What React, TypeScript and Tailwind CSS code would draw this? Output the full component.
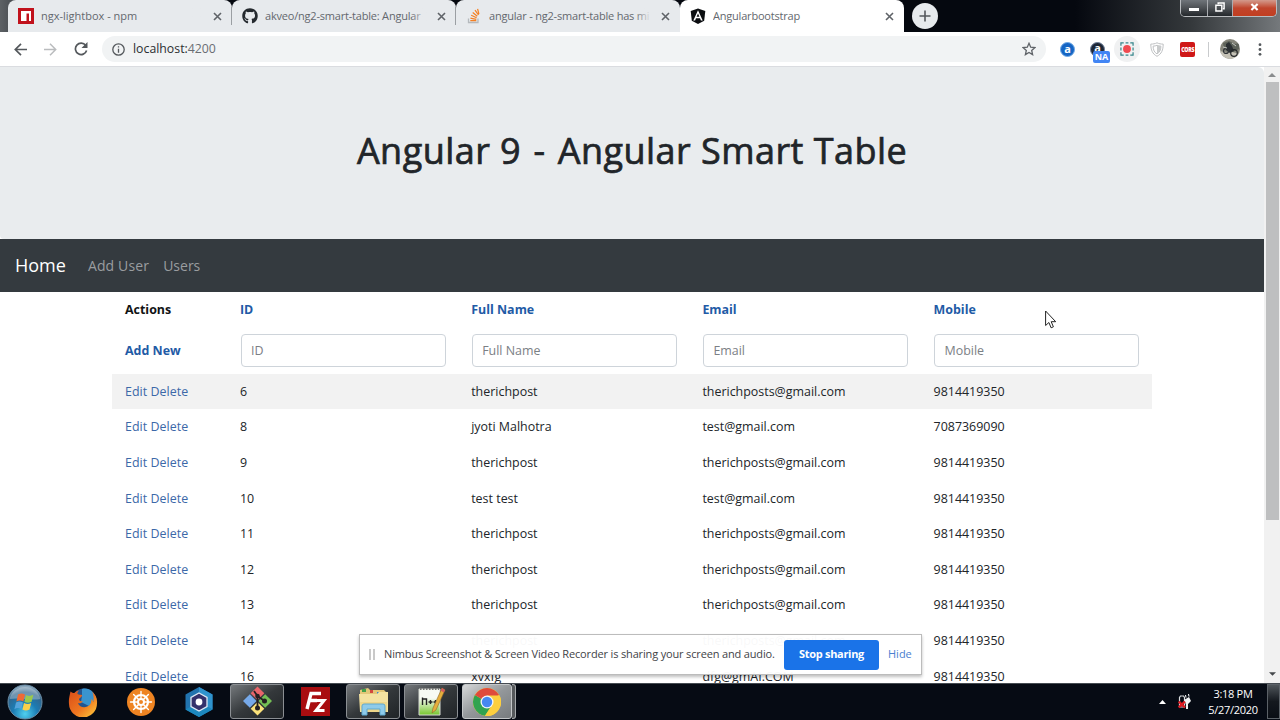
import type { ReactNode } from "react";
import { FaGithub } from "react-icons/fa";

const rows = [
  { id: "6", name: "therichpost", email: "therichposts@gmail.com", mobile: "9814419350" },
  { id: "8", name: "jyoti Malhotra", email: "test@gmail.com", mobile: "7087369090" },
  { id: "9", name: "therichpost", email: "therichposts@gmail.com", mobile: "9814419350" },
  { id: "10", name: "test test", email: "test@gmail.com", mobile: "9814419350" },
  { id: "11", name: "therichpost", email: "therichposts@gmail.com", mobile: "9814419350" },
  { id: "12", name: "therichpost", email: "therichposts@gmail.com", mobile: "9814419350" },
  { id: "13", name: "therichpost", email: "therichposts@gmail.com", mobile: "9814419350" },
  { id: "14", name: "therichpost", email: "therichposts@gmail.com", mobile: "9814419350" },
  { id: "16", name: "xvxfg", email: "dfg@gmAI.COM", mobile: "9814419350" },
];

const columns = ["ID", "Full Name", "Email", "Mobile"];

function CloseIcon() {
  return (
    <svg className="h-[9px] w-[9px] shrink-0" viewBox="0 0 9 9" stroke="#5f6368" strokeWidth="1.6">
      <path d="M1 1l7 7M8 1l-7 7" />
    </svg>
  );
}

function NpmIcon() {
  return (
    <svg className="h-4 w-4" viewBox="0 0 16 16">
      <path fill="#c1121c" d="M0 0h16v16H0z" />
      <path fill="#fff" d="M3 3h10v10h-2V5.5H8.5V13H3z" />
    </svg>
  );
}

function StackIcon() {
  return (
    <svg className="h-4 w-4" viewBox="0 0 16 16" fill="none">
      <path d="M2.5 10.5v4H12v-4" stroke="#b5b9bd" strokeWidth="1.3" />
      <path
        d="M4.3 12.6h6M4.4 10.2l5.9 1.1M5.2 7.3l5.4 2.5M6.7 4.5l4.6 3.7M9 2.2L12.5 7M11.6.8l1.3 5.4"
        stroke="#f48024"
        strokeWidth="1.25"
      />
    </svg>
  );
}

function AngularIcon() {
  return (
    <svg className="h-4 w-4" viewBox="0 0 16 16">
      <path fill="#0b0d10" d="M8 .5l7.3 2.6-1.1 9.6L8 16l-6.2-3.3L.7 3.1z" />
      <path
        fill="#fff"
        fillRule="evenodd"
        d="M8 2.2l4.7 10.3h-1.8l-.9-2.3H6l-.9 2.3H3.3zM8 5.5L6.6 8.8h2.8z"
      />
    </svg>
  );
}

function Tab({ icon, title, active, divider }: { icon: ReactNode; title: ReactNode; active?: boolean; divider?: boolean }) {
  return (
    <div
      className={
        active
          ? "flex h-8 w-[224px] items-center rounded-t-lg bg-white pr-[10px] pl-[10px]"
          : "relative flex h-8 w-[224px] items-center rounded-t-lg bg-[#e7eaed] pr-[10px] pl-[10px]"
      }
    >
      <span className="flex h-4 w-4 shrink-0">{icon}</span>
      <span className="relative ml-[7px] min-w-0 flex-1 overflow-hidden text-[11px] tracking-[-0.2px] whitespace-nowrap text-[#64686d]">
        {title}
        {!active && <span className="absolute inset-y-0 right-0 w-4 bg-linear-to-r from-transparent to-[#e7eaed]" />}
      </span>
      <span className="ml-[10px] flex">
        <CloseIcon />
      </span>
      {divider && <span className="absolute top-[7px] right-0 h-[18px] w-px bg-[#9b9fa3]" />}
    </div>
  );
}

function WindowButtons() {
  return (
    <div className="flex h-[17px] w-[97px] overflow-hidden rounded-b-[5px] border border-t-0 border-[#b9bcbf]">
      <div className="flex w-[27px] items-center justify-center border-r border-[#a9acb0] bg-linear-to-b from-[#70757a] via-[#4d5155] to-[#24282c]">
        <span className="mt-[3px] h-[3px] w-[10px] bg-white" />
      </div>
      <div className="flex w-[25px] items-start justify-center border-r border-[#a9acb0] bg-linear-to-b from-[#70757a] via-[#4d5155] to-[#24282c] pt-[2px]">
        <svg className="h-[10px] w-[10px]" viewBox="0 0 11 11" fill="none" stroke="#fff" strokeWidth="1.6">
          <path d="M3.5 2.5V1H10v6.5H8.5" />
          <path d="M1 3.5h6.5V10H1z" />
        </svg>
      </div>
      <div className="flex flex-1 items-start justify-center bg-linear-to-b from-[#d29a8c] via-[#c0452c] to-[#c23e20] pt-[3px]">
        <svg className="h-[8px] w-[9px]" viewBox="0 0 10 9" stroke="#fff" strokeWidth="2.4">
          <path d="M1.5 1l7 7M8.5 1l-7 7" />
        </svg>
      </div>
    </div>
  );
}

function TabStrip() {
  return (
    <div className="flex h-8 shrink-0 bg-linear-to-r from-[#5d6165] from-0% via-[#05080f] via-5% to-[#05080f]">
      <div className="flex flex-1 bg-linear-to-r from-transparent from-84% via-[#34383b] via-93% to-[#75797c] pl-2">
        <Tab icon={<NpmIcon />} title={<span className="tracking-normal">ngx-lightbox - npm</span>} divider />
        <Tab icon={<FaGithub className="h-4 w-4 text-[#24292e]" />} title="akveo/ng2-smart-table: Angular" divider />
        <Tab icon={<StackIcon />} title="angular - ng2-smart-table has mi" />
        <Tab icon={<AngularIcon />} title="Angularbootstrap" active />
        <div className="mt-[3px] ml-[8px] flex h-[26px] w-[26px] items-center justify-center rounded-full bg-[#e7eaed]">
          <svg className="h-3 w-3" viewBox="0 0 12 12" stroke="#54585c" strokeWidth="1.6">
            <path d="M6 .5v11M.5 6h11" />
          </svg>
        </div>
        <div className="mr-[3px] ml-auto">
          <WindowButtons />
        </div>
      </div>
    </div>
  );
}

function Toolbar() {
  return (
    <div className="flex h-[35px] shrink-0 items-center border-b border-[#dadce0] bg-white pl-[14px]">
      <svg className="h-[13px] w-[13px]" viewBox="0 0 13 13" fill="none" stroke="#54585c" strokeWidth="1.7">
        <path d="M13 6.5H1.5M7 .8L1.3 6.5 7 12.2" />
      </svg>
      <svg className="ml-[17px] h-[13px] w-[13px]" viewBox="0 0 13 13" fill="none" stroke="#babcbe" strokeWidth="1.5">
        <path d="M0 6.5h11.5M6 .8l5.7 5.7L6 12.2" />
      </svg>
      <svg className="ml-[17px] h-[14px] w-[14px]" viewBox="0 0 14 14" fill="none">
        <path d="M11.7 3.4A5.7 5.7 0 1 0 12.6 8.5" stroke="#54585c" strokeWidth="1.7" />
        <path d="M13.5 0v6H7.5z" fill="#54585c" />
      </svg>
      <div className="ml-[14px] flex h-[26px] w-[944px] items-center rounded-full bg-[#f1f3f4] pr-[10px] pl-[10px]">
        <svg className="h-[13px] w-[13px]" viewBox="0 0 13 13" fill="none" stroke="#54585c" strokeWidth="1.3">
          <circle cx="6.5" cy="6.5" r="5.7" />
          <path d="M6.5 5.7v4M6.5 3.2v1.4" />
        </svg>
        <span className="ml-[8px] text-[12.3px] text-[#2b2e31]">
          localhost:<span className="text-[#6a6e73]">4200</span>
        </span>
        <svg className="ml-auto h-[14px] w-[14px]" viewBox="0 0 14 14" fill="none" stroke="#5f6368" strokeWidth="1.3">
          <path d="M7 1.3l1.7 3.9 4.2.4-3.2 2.8.9 4.2L7 10.4l-3.6 2.2.9-4.2L1.1 5.600l4.2-.4z" />
        </svg>
      </div>
      <div className="ml-[14px] flex h-[15px] w-[15px] items-center justify-center rounded-full border border-[#6fa9e6] bg-[#1565c4] text-[11px] leading-none font-bold text-white">
        <span className="-mt-0.5">a</span>
      </div>
      <div className="relative ml-[15px] flex h-[15px] w-[15px] items-center justify-center rounded-full border border-[#6f7f99] bg-[#1d2737] text-[11px] leading-none font-bold text-white">
        <span className="-mt-1">a</span>
        <span className="absolute top-[8px] left-[2px] flex h-[12px] w-[17px] items-center justify-center rounded-[2px] bg-[#4285f4] text-[9px] leading-none font-bold text-white">
          NA
        </span>
      </div>
      <div className="ml-[9px] flex h-[26px] w-[26px] items-center justify-center rounded-full bg-[#f0f1f2]">
        <svg className="h-[14px] w-[14px]" viewBox="0 0 15 15" fill="none">
          <path
            d="M1 4V1h3M6 1h3M11 1h3v3M14 6v3M14 11v3h-3M9 14H6M4 14H1v-3M1 9V6"
            stroke="#35858a"
            strokeWidth="1.3"
          />
          <circle cx="7.5" cy="7.5" r="4.2" fill="#f04b51" />
        </svg>
      </div>
      <svg className="ml-[10px] h-[15px] w-[14px]" viewBox="0 0 14 15" fill="none">
        <path d="M7 .8c2 1 4 1.3 6.2 1.3C13.2 8 11.5 12 7 14.3 2.5 12 .8 8 .8 2.1 3 2.1 5 1.8 7 .8z" stroke="#bfc1c3" />
        <path d="M7 3.3c1.3.6 2.5.8 3.9.8C10.8 8 9.7 10.3 7 11.9 4.3 10.3 3.2 8 3.1 4.1 4.5 4.1 5.7 3.9 7 3.3z" stroke="#bfc1c3" />
        <path d="M7 3.3v8.6c2.7-1.6 3.8-4 3.9-7.8-1.4 0-2.6-.2-3.9-.8z" fill="#c9cbcc" />
      </svg>
      <div className="ml-[16px] flex h-[15px] w-[15px] items-center justify-center rounded-[2px] bg-[#cf1717]">
        <span className="scale-x-75 text-[7px] leading-none font-extrabold tracking-tighter text-white">CORS</span>
      </div>
      <span className="ml-[13px] h-[15px] w-px bg-[#c9cbcd]" />
      <svg className="ml-[11px] h-5 w-5" viewBox="0 0 20 20">
        <clipPath id="avatar">
          <circle cx="10" cy="10" r="10" />
        </clipPath>
        <g clipPath="url(#avatar)">
          <path fill="#85857a" d="M0 0h20v20H0z" />
          <path fill="#c5c2b6" d="M0 12l7 2 5-1 8 2v5H0z" />
          <path fill="#5e635a" d="M3 4l6-2 6 3 4-1v6l-6 3-9-2z" />
          <path fill="#2b3033" d="M6 5l3-2 3 4 2 5-4 2-4-3z" />
          <circle cx="14" cy="14" r="3.3" fill="none" stroke="#25282a" strokeWidth="1.2" />
          <circle cx="6" cy="12" r="2.5" fill="none" stroke="#303438" strokeWidth="1.2" />
          <path d="M12 4l4 3M3 8l4 1" stroke="#c6c8c2" />
        </g>
      </svg>
      <svg className="ml-[18px] h-[13px] w-[4px]" viewBox="0 0 4 13" fill="#54585c">
        <circle cx="2" cy="1.7" r="1.4" />
        <circle cx="2" cy="6.5" r="1.4" />
        <circle cx="2" cy="11.3" r="1.4" />
      </svg>
    </div>
  );
}

function SmartTable() {
  return (
    <div className="mx-auto w-[1040px] text-[12.45px] leading-[18px] text-[#212529]">
      <div className="grid h-[36px] grid-cols-[115.5px_repeat(4,231.2px)] items-center font-bold text-[#1f5ba6]">
        <div className="pl-[13px] text-[#111315]">Actions</div>
        {columns.map((c) => (
          <div key={c} className="pl-[12.5px]">
            {c}
          </div>
        ))}
      </div>
      <div className="grid h-[45.5px] grid-cols-[115.5px_repeat(4,231.2px)] items-start pt-[6px]">
        <div className="pt-[7.5px] pl-[13px] font-bold text-[#1f5ba6]">Add New</div>
        {columns.map((c) => (
          <div key={c} className="pr-[13px] pl-[13px]">
            <input
              placeholder={c}
              className="block h-[33px] w-full rounded-[4px] border border-[#ced4da] bg-white px-[9.5px] placeholder:text-[#7b8085]"
            />
          </div>
        ))}
      </div>
      {rows.map((r, i) => (
        <div
          key={r.id}
          className={
            i === 0
              ? "grid h-[35.6px] grid-cols-[115.5px_repeat(4,231.2px)] items-center bg-[#f2f2f2] pt-px"
              : "grid h-[35.6px] grid-cols-[115.5px_repeat(4,231.2px)] items-center pt-px"
          }
        >
          <div className="flex gap-[3.5px] pl-[13px] text-[#3c68a8]">
            <a>Edit</a>
            <a>Delete</a>
          </div>
          <div className="pl-[12.5px]">{r.id}</div>
          <div className="pl-[12.5px]">{r.name}</div>
          <div className="pl-[12.5px]">{r.email}</div>
          <div className="pl-[12.5px]">{r.mobile}</div>
        </div>
      ))}
    </div>
  );
}

function Scrollbar() {
  return (
    <div className="flex w-4 shrink-0 flex-col items-center bg-[#f1f1f1]">
      <svg className="mt-[6px] h-[4px] w-[8px]" viewBox="0 0 8 4" fill="#8a8c8e">
        <path d="M4 0l4 4H0z" />
      </svg>
      <div className="mt-[5px] h-[438px] w-[13px] bg-[#bebfc0]" />
      <svg className="mt-auto mb-[7px] h-[4px] w-[7px]" viewBox="0 0 8 4" fill="#45484b">
        <path d="M0 0h8L4 4z" />
      </svg>
    </div>
  );
}

function SharingBar() {
  return (
    <div className="absolute top-[634px] left-[359px] flex h-[41px] w-[563px] items-center border border-[#bcbcbc] bg-white/97 pl-[9px] text-[11px] shadow-[0_2px_3px_rgba(0,0,0,0.25)]">
      <span className="h-[11px] w-[6px] border-x-2 border-[#c9c9c9]" />
      <span className="-mt-px ml-[9px] w-[391px] tracking-[-0.155px] whitespace-nowrap text-[#3f4347]">
        Nimbus Screenshot &amp; Screen Video Recorder is sharing your screen and audio.
      </span>
      <button className="ml-[9px] h-[30px] w-[95px] rounded-[3px] bg-[#1a73e8] pb-px font-bold tracking-[-0.3px] text-white">
        Stop sharing
      </button>
      <a className="-mt-px ml-[9px] text-[#4a80d0]">Hide</a>
    </div>
  );
}

function StartIcon() {
  return (
    <svg className="h-9 w-9" viewBox="0 0 36 36">
      <defs>
        <radialGradient id="orb" cx="50%" cy="85%" r="80%">
          <stop offset="0" stopColor="#4fd0ef" />
          <stop offset=".45" stopColor="#1c7cb4" />
          <stop offset=".8" stopColor="#31658c" />
          <stop offset="1" stopColor="#8ba8bd" />
        </radialGradient>
      </defs>
      <circle cx="18" cy="18" r="17" fill="url(#orb)" stroke="#6c8fa8" />
      <path d="M2.5 15a16 16 0 0 1 31 0c-9 2-20-2-31 0z" fill="#fff" opacity=".3" />
      <path d="M11 10.5c2.5-1.6 4.5-1.3 7 0l-1.6 7c-2.4-1.4-4.5-1.4-7 0z" fill="#ee6a35" />
      <path d="M19 11c2.5 1.4 4.7 1.2 7.3-.2l-1.7 7c-2.6 1.3-4.7 1.4-7.2 0z" fill="#9bc94c" />
      <path d="M9 18.6c2.5-1.5 4.6-1.3 7-.1L14.4 25c-2.5-1.2-4.5-1.2-7 .2z" fill="#54a4dc" />
      <path d="M17 19c2.5 1.4 4.6 1.3 7.2.1L22.5 25.5c-2.5 1.4-4.7 1.3-7.1 0z" fill="#fbd04b" />
    </svg>
  );
}

function FirefoxIcon() {
  return (
    <svg className="h-[30px] w-[30px]" viewBox="0 0 30 30">
      <defs>
        <linearGradient id="fox" x1="0" y1="0" x2="1" y2="1">
          <stop offset="0" stopColor="#d94c19" />
          <stop offset=".55" stopColor="#ef7720" />
          <stop offset="1" stopColor="#ffd23e" />
        </linearGradient>
      </defs>
      <circle cx="16" cy="14" r="12.5" fill="#24558f" />
      <path d="M14 2c7-2 13 3 13.5 10L21 19l-8-4 1-6z" fill="#3a94ce" />
      <path
        d="M2.5 4.5C4 6 5 6 6.5 6c1-1.5 3-2.5 4.5-2.5-1 1-1.7 2.5-1.5 3.5 1.5 1 3 .5 4.8 1.2-.5 2.2-3 2.5-3.3 4 .5 2 1.5 2 3.8 2-1 2-3.5 2.3-5 1.8 1.5 4 6 5 9.5 3.5 3-1.3 4.5-4 3.8-7.5 1 .5 2 2 2.2 3C26 11 25.5 7 24 4.5c3.5 3 5.5 7 5 11.5A14 14 0 0 1 1 17c-.5-4.5.5-8 1.5-12.5z"
        fill="url(#fox)"
      />
    </svg>
  );
}

function WheelIcon() {
  return (
    <svg className="h-[28px] w-[28px]" viewBox="0 0 28 28" fill="none" stroke="#fff">
      <circle cx="14" cy="14" r="14" fill="#ee8422" stroke="none" />
      <circle cx="14" cy="14" r="7" strokeWidth="2.2" />
      <circle cx="14" cy="14" r="3" strokeWidth="2" />
      <path
        d="M14 3.5v7M14 17.5v7M3.5 14h7M17.5 14h7M6.6 6.6l5 5M16.4 16.4l5 5M21.4 6.6l-5 5M11.6 16.4l-5 5"
        strokeWidth="1.4"
        strokeLinecap="round"
      />
    </svg>
  );
}

function HexIcon() {
  return (
    <svg className="h-[30px] w-[28px]" viewBox="0 0 28 30">
      <path d="M14 0l13.5 7.5v15L14 30 .5 22.5v-15z" fill="#2173ae" />
      <path d="M14 0l13.5 7.5v15L14 15z" fill="#2f93cd" />
      <path d="M14 30L.5 22.5 14 15l13.5 7.5z" fill="#1c87bd" />
      <path d="M14 6l8 4.500v9L14 24l-8-4.500v-9z" fill="#34316b" stroke="#dfe7f3" strokeWidth="1.3" />
      <circle cx="14" cy="15" r="3.4" fill="#fff" />
    </svg>
  );
}

function GitIcon() {
  return (
    <svg className="h-[31px] w-[31px]" viewBox="0 0 31 31">
      <path d="M15.5.5l6.8 6.8-6.8 6.8-6.8-6.8z" fill="#e8656a" />
      <path d="M7.8 8.2l6.8 6.8-6.8 6.8L1 15z" fill="#76a9e9" />
      <path d="M23.2 8.2L30 15l-6.8 6.8-6.8-6.8z" fill="#74bf55" />
      <path d="M15.5 16l6.8 6.8-6.8 6.8-6.8-6.8z" fill="#fbe27a" />
      <path d="M12 5l3.5 5v12M15.5 10l7 5" stroke="#231f20" strokeWidth="1.8" fill="none" />
      <circle cx="15.5" cy="10" r="2.3" fill="#231f20" />
      <circle cx="15.5" cy="22" r="2.5" fill="#231f20" />
      <circle cx="22.5" cy="15" r="2.5" fill="#231f20" />
    </svg>
  );
}

function FileZillaIcon() {
  return (
    <svg className="h-[29px] w-[29px]" viewBox="0 0 29 29" fill="none" stroke="#fff">
      <path d="M0 0h29v29H0z" fill="#a90d10" stroke="none" />
      <path d="M6 22L10 6.5H20M7.5 13.5H16" strokeWidth="3.4" />
      <path d="M13.5 13.5h9.5L15 23.5h8.5" strokeWidth="3" />
    </svg>
  );
}

function ExplorerIcon() {
  return (
    <svg className="h-[29px] w-[31px]" viewBox="0 0 31 29">
      <path d="M2 3l8-2 2 2h14l3 3v18H2z" fill="#e3c779" />
      <path d="M4 2h4v3H4z" fill="#43a14b" />
      <path d="M12 3h3v3h-3z" fill="#d3473e" />
      <path d="M19 5h4v3h-4z" fill="#3d87c8" />
      <path d="M1 7h18l2-2h9v20H2z" fill="#f4e2a0" />
      <path d="M2 15h27v10H3z" fill="#edd68a" />
      <path d="M4 28v-9q0-2 2-2h19q2 0 2 2v9h-5v-6H9v6z" fill="#8ecbea" stroke="#5fa9cf" />
    </svg>
  );
}

function NotepadIcon() {
  return (
    <svg className="h-[30px] w-[29px]" viewBox="0 0 29 30">
      <defs>
        <linearGradient id="pad" x1="0" y1="0" x2="0" y2="1">
          <stop offset=".35" stopColor="#f7faf3" />
          <stop offset="1" stopColor="#75c52c" />
        </linearGradient>
      </defs>
      <path d="M2 2h21v26H2z" fill="url(#pad)" stroke="#d5d9d2" />
      <path d="M3 2h19" stroke="#777" strokeWidth="2" strokeDasharray="1.5 1.5" />
      <path d="M5.5 18v-7.5M5.5 12h4v6M11.5 15h4M13.5 13v4M16.5 15h4M18.5 13v4" stroke="#222" strokeWidth="1.4" fill="none" />
      <path d="M25 1l3 2-9 20-4 3 1-5z" fill="#e5ae3c" stroke="#8d6a2a" strokeWidth=".6" />
      <path d="M25 1l3 2-1.2 2.5-3-1.8z" fill="#d4595f" />
    </svg>
  );
}

function ChromeIcon() {
  return (
    <svg className="h-[28px] w-[28px]" viewBox="0 0 28 28">
      <circle cx="14" cy="14" r="14" fill="#fdcf3f" />
      <path d="M14 14L1.9 7A14 14 0 0 0 12 27.85L18.8 17z" fill="#31a350" />
      <path d="M14 14L1.9 7a14 14 0 0 1 24.2 0z" fill="#df4a3c" />
      <path d="M14 7.5h12.4A14 14 0 0 1 12 27.85l7.5-10.6z" fill="#fdcf3f" />
      <circle cx="14" cy="14" r="6.5" fill="#f4f6f8" />
      <circle cx="14" cy="14" r="5.2" fill="#4688f1" />
    </svg>
  );
}

function TaskButton({ children }: { children: ReactNode }) {
  return (
    <div className="flex h-[35px] w-[54px] items-center justify-center rounded-[3px] border border-[#8b8f93] bg-linear-to-br from-[#75797c] via-[#34383b] to-[#202427]">
      {children}
    </div>
  );
}

function Taskbar() {
  return (
    <div className="flex h-[37px] shrink-0 items-center border-t border-[#454b51] bg-[#060b14] pb-px">
      <div className="ml-[7px] flex w-9">
        <StartIcon />
      </div>
      <div className="ml-[25px] flex">
        <FirefoxIcon />
      </div>
      <div className="ml-[29px] flex">
        <WheelIcon />
      </div>
      <div className="ml-[30px] flex">
        <HexIcon />
      </div>
      <div className="ml-[17px] flex">
        <TaskButton>
          <GitIcon />
        </TaskButton>
      </div>
      <div className="ml-[17px] flex">
        <FileZillaIcon />
      </div>
      <div className="ml-[16px] flex gap-[4px]">
        <TaskButton>
          <ExplorerIcon />
        </TaskButton>
        <TaskButton>
          <NotepadIcon />
        </TaskButton>
        <div className="flex">
          <div className="flex h-[35px] w-[50px] items-center justify-center rounded-[3px] border border-[#c3c6c8] bg-linear-to-br from-[#d6d8d9] via-[#93979a] to-[#777b7e]">
            <ChromeIcon />
          </div>
          <div className="h-[35px] w-[4px] rounded-r-[3px] border border-l-0 border-[#a5a9ac] bg-[#55595c]" />
        </div>
      </div>
      <svg className="ml-auto h-[4px] w-[7px]" viewBox="0 0 7 4" fill="#fff">
        <path d="M3.5 0L7 4H0z" />
      </svg>
      <svg className="ml-[12px] h-[15px] w-[13px]" viewBox="0 0 13 15">
        <path d="M1.5 13V3.5l1-1.5h3l1 1.5V13z" fill="none" stroke="#d9dcde" strokeWidth="1.2" />
        <path d="M6 6l5-3 2 4-3 3v5H8v-4.5z" fill="#f2f3f4" />
        <path d="M8 3.5L7.5 1M11 2.5L10.5 0" stroke="#fff" />
        <path d="M.8 7.5l6.2 6M7 7.5l-6.2 6" stroke="#e01b22" strokeWidth="2.4" />
      </svg>
      <div className="ml-[16px] w-[52px] text-center text-[11px] leading-[15.5px] tracking-[-0.3px] whitespace-nowrap text-white">
        <div>3:18 PM</div>
        <div>5/27/2020</div>
      </div>
      <div className="ml-[8px] h-[35px] w-[13px] border border-[#5b6167] bg-linear-to-b from-[#50565b] via-[#14181e] to-[#0a0e15]" />
    </div>
  );
}

export default function App() {
  return (
    <main className="relative flex h-[720px] w-[1280px] flex-col overflow-hidden bg-white font-['Open_Sans','Noto_Sans',sans-serif]">
      <TabStrip />
      <Toolbar />
      <div className="flex min-h-0 flex-1">
        <div className="min-w-0 flex-1 overflow-hidden">
          <div className="flex h-[172px] items-center justify-center rounded-tr-[6px] rounded-bl-[4px] bg-[#e9ecee] pb-[5px]">
            <h1 className="text-[36px] leading-none tracking-[0.45px] whitespace-nowrap text-[#212529] [-webkit-text-stroke:0.7px_#212529]">
              Angular 9 <span className="mx-[2.5px]">-</span> Angular Smart Table
            </h1>
          </div>
          <nav className="flex h-[53px] items-center bg-[#343a3f] pl-[15px] text-[#9a9da0]">
            <a className="text-[18px] text-white">Home</a>
            <a className="ml-[22px] text-[14px] tracking-[0.15px]">Add User</a>
            <a className="ml-[14px] text-[14px]">Users</a>
          </nav>
          <SmartTable />
        </div>
        <Scrollbar />
      </div>
      <Taskbar />
      <SharingBar />
      <svg className="absolute top-[310px] left-[1045px] h-[19px] w-[12px]" viewBox="0 0 12 19">
        <path d="M.6 1v14.5l3.3-3 2.2 5.3 2.3-1-2.2-5.1h4.500z" fill="#fff" stroke="#222" />
      </svg>
    </main>
  );
}
